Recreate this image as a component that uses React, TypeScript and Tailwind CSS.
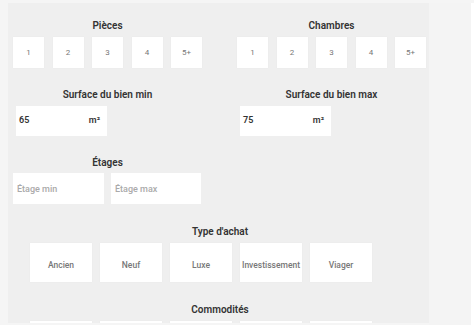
import React from 'react';

const counts = ['1', '2', '3', '4', '5+'];
const achats = ['Ancien', 'Neuf', 'Luxe', 'Investissement', 'Viager'];
const commodites = ['', '', '', '', ''];

function Label({ children, className = '' }: { children: React.ReactNode; className?: string }) {
    return (
        <div className={`text-[10px] leading-[12px] pt-[2px] font-semibold text-[#333] text-center ${className}`}>
            {children}
        </div>
    );
}

function CountGroup({ title }: { title: string }) {
    return (
        <div className="w-[189px]">
            <Label className="mb-[5px]">{title}</Label>
            <div className="flex gap-[8.5px]">
                {counts.map((c) => (
                    <button
                        key={c}
                        className="w-[31px] h-[31px] bg-white text-[8px] text-[#777] flex items-center justify-center shadow-[0_0_1px_rgba(0,0,0,0.06)]"
                    >
                        {c}
                    </button>
                ))}
            </div>
        </div>
    );
}

function SurfaceField({ title, value }: { title: string; value: string }) {
    return (
        <div className="w-[189px]">
            <Label className="mb-[5px]">{title}</Label>
            <div className="ml-[3px] w-[91px] h-[30px] bg-white flex items-center justify-between pl-[3px] pr-[7px] text-[9px] font-semibold text-[#333]">
                <span>{value}</span>
                <span>m²</span>
            </div>
        </div>
    );
}

function TileRow({ items }: { items: string[] }) {
    return (
        <div className="flex gap-[8px] pl-[22px]">
            {items.map((item, i) => (
                <button
                    key={i}
                    className="w-[62px] h-[39px] shrink-0 bg-white text-[8.5px] font-medium text-[#777] flex items-center justify-center pt-[6px] shadow-[0_0_1px_rgba(0,0,0,0.06)]"
                >
                    {item}
                </button>
            ))}
        </div>
    );
}

export default function App() {
    return (
        <div
            className="w-[474px] h-[325px] overflow-hidden flex bg-[#f5f5f5] pl-[8px] pt-[3px]"
            style={{ fontFamily: 'Roboto, "Liberation Sans", Arial, sans-serif' }}
        >
            <div className="w-[421px] h-[320px] shrink-0 bg-[#efefef] pt-[15px] overflow-hidden">
                <div className="flex gap-[35px] pl-[5px]">
                    <CountGroup title="Pièces" />
                    <CountGroup title="Chambres" />
                </div>

                <div className="flex gap-[35px] pl-[5px] mt-[19px]">
                    <SurfaceField title="Surface du bien min" value="65" />
                    <SurfaceField title="Surface du bien max" value="75" />
                </div>

                <div className="pl-[5px] mt-[19px] w-[194px]">
                    <Label className="mb-[4px]">Étages</Label>
                    <div className="flex gap-[7px]">
                        <input
                            placeholder="Étage min"
                            className="w-[91px] h-[31px] bg-white pl-[4px] text-[9px] font-medium text-[#333] placeholder-[#aaa] outline-none"
                        />
                        <input
                            placeholder="Étage max"
                            className="w-[90px] h-[31px] bg-white pl-[4px] text-[9px] font-medium text-[#333] placeholder-[#aaa] outline-none"
                        />
                    </div>
                </div>

                <Label className="mt-[20px] mb-[5px] pl-[3px]">Type d&apos;achat</Label>
                <TileRow items={achats} />

                <Label className="mt-[20px] mb-[5px] pl-[3px]">Commodités</Label>
                <TileRow items={commodites} />
            </div>
            <div className="w-[42px] shrink-0 bg-[#f4f4f4]" />
            <div className="flex-1 bg-white" />
        </div>
    );
}
